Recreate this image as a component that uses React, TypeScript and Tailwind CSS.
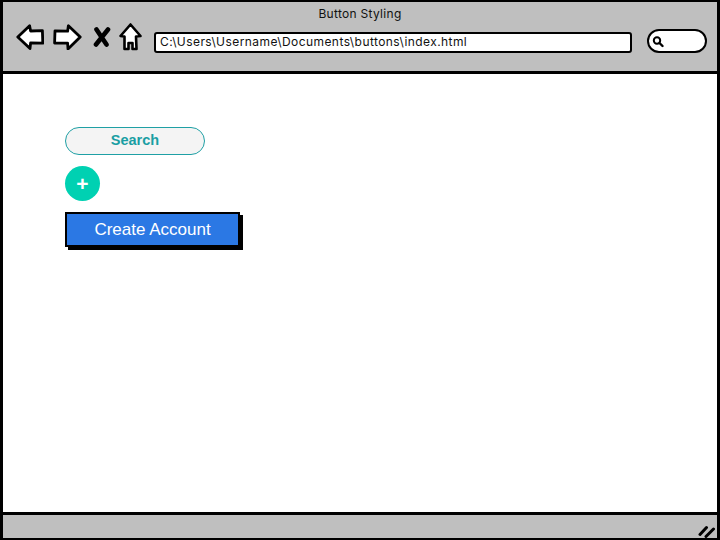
import React from 'react';

const BackIcon = () => (
  <svg width="28" height="26" viewBox="0 0 28 26" className="shrink-0">
    <path d="M1.8 13 L13.6 1.8 L14.6 7 L26.4 6.6 L26.8 19.2 L14.6 19 L14 24.5 Z" fill="#fff" stroke="#000" strokeWidth="2.8" strokeLinejoin="round" />
  </svg>
);

const ForwardIcon = () => (
  <svg width="29" height="26" viewBox="0 0 29 26" className="shrink-0">
    <path d="M27.2 13 L15.4 1.8 L14.6 7.2 L2 6.8 L1.6 19 L14.6 19.2 L15 25 Z" fill="#fff" stroke="#000" strokeWidth="2.8" strokeLinejoin="round" />
  </svg>
);

const StopIcon = () => (
  <svg width="18" height="20" viewBox="0 0 18 20" className="shrink-0">
    <path d="M3.5 2.5 L13.5 17.5 M15 2.5 L3 17.5" fill="none" stroke="#000" strokeWidth="4.6" strokeLinecap="round" />
  </svg>
);

const HomeIcon = () => (
  <svg width="23" height="28" viewBox="0 0 23 28" className="shrink-0">
    <path d="M11.5 1.5 L21.5 13 L17 13.5 L17.5 26 L13.5 26 L13.5 20 L9.5 20 L9.5 26 L5.5 26 L5.5 13.5 L1.5 13 Z" fill="#fff" stroke="#000" strokeWidth="2.6" strokeLinejoin="round" />
  </svg>
);

const SearchGlyph = () => (
  <svg width="12" height="13" viewBox="0 0 12 13" className="shrink-0">
    <circle cx="5" cy="5.5" r="3.2" fill="none" stroke="#000" strokeWidth="2" />
    <path d="M7.5 8 L10.5 11" stroke="#000" strokeWidth="2.4" strokeLinecap="round" />
  </svg>
);

const GripIcon = () => (
  <svg width="18" height="14" viewBox="0 0 18 14">
    <path d="M2 10.5 L8.5 3.5 M8 12.5 L15.5 5" fill="none" stroke="#000" strokeWidth="3" strokeLinecap="round" />
  </svg>
);

export default function App() {
  return (
    <div className="flex h-[540px] w-[720px] flex-col overflow-hidden border-x-[3px] border-y-2 border-x-black border-y-black bg-white font-['Liberation_Sans',sans-serif]">
      <header className="h-[72px] shrink-0 border-b-[3px] border-black bg-[#bfbfbf]">
        <div className="pt-[4px] text-center font-['Inter',sans-serif] text-[12px] leading-[16px] tracking-[0.3px] text-[#111]">
          Button Styling
        </div>
        <div className="flex items-center pl-[13px] pr-[10px] pt-[1px]">
          <div className="mb-[10px] flex items-center">
            <BackIcon />
            <div className="ml-[9px]"><ForwardIcon /></div>
            <div className="ml-[11px]"><StopIcon /></div>
            <div className="ml-[8px]"><HomeIcon /></div>
          </div>
          <div className="ml-[12px] flex h-[21px] w-[479px] items-center rounded-[3px] border-2 border-black bg-white pl-[4px] font-['Inter',sans-serif] text-[12px] tracking-[0.43px] text-[#111]">
            {'C:\\Users\\Username\\Documents\\buttons\\index.html'}
          </div>
          <div className="mb-[2px] ml-[15px] flex h-[24px] w-[60px] items-center rounded-full border-2 border-black bg-white pl-[3px]">
            <SearchGlyph />
          </div>
        </div>
      </header>

      <main className="flex flex-1 flex-col items-start pl-[62px] pt-[53px]">
        <button className="h-[28px] w-[140px] rounded-full border border-[#1fa0a5] bg-[#f4f4f4] text-[14.5px] font-bold text-[#1a9ea3]">
          Search
        </button>
        <button className="mt-[11px] flex h-[35px] w-[35px] items-center justify-center rounded-full bg-[#00d1b2] text-[21px] font-bold leading-none text-white">
          +
        </button>
        <button className="mt-[11px] h-[35px] w-[175px] border-2 border-black bg-[#2b78e4] text-[17px] text-white shadow-[3px_3px_0_#000]">
          Create Account
        </button>
      </main>

      <footer className="flex h-[26px] shrink-0 items-end justify-end border-t-[3px] border-black bg-[#bfbfbf] pr-[1px]">
        <GripIcon />
      </footer>
    </div>
  );
}
